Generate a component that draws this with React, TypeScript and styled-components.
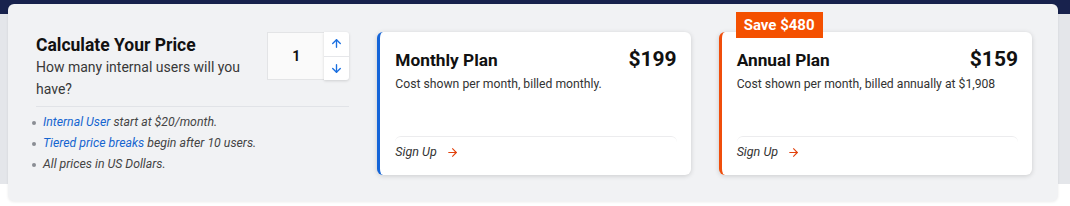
import React, { FC } from 'react';
import styled, { createGlobalStyle } from 'styled-components';
import { ArrowRight, ArrowUp, ArrowDown } from 'lucide-react';

const GlobalStyle = createGlobalStyle`
  html, body {
    margin: 0;
    padding: 0;
    background: #fff;
  }
  body {
    font-family: Roboto, "Liberation Sans", Arial, sans-serif;
    color: #111;
  }
  * { box-sizing: border-box; }
`;

const Page = styled.div`
  height: 206px;
  padding-top: 4px;
  background: linear-gradient(#18224d 0 14px, #e4e6ea 14px 184px, #fff 184px);
  overflow: hidden;
`;

const Panel = styled.div`
  margin-left: 8px;
  width: 1050px;
  display: grid;
  grid-template-columns: repeat(3, 1fr);
  gap: 28px;
  padding: 28px 26px 26px 28px;
  background: #f1f2f4;
  border-radius: 6px;
  box-shadow: 0 1px 3px rgba(0, 0, 0, 0.08);
`;

const Calc = styled.div`
  display: flex;
  flex-direction: column;
`;

const CalcHeader = styled.div`
  display: flex;
  align-items: flex-start;
`;

const CalcText = styled.div`
  flex: 1;
  padding-top: 2px;
`;

const Heading = styled.h2`
  margin: 0;
  font-size: 17.5px;
  line-height: 22px;
  font-weight: 700;
  color: #111;
`;

const Sub = styled.p`
  margin: 0;
  font-size: 14px;
  line-height: 22px;
  color: #383838;
`;

const Stepper = styled.div`
  display: flex;
  height: 48px;
`;

const NumberBox = styled.div`
  width: 57px;
  height: 48px;
  display: flex;
  align-items: center;
  justify-content: center;
  background: #fafafa;
  border: 1px solid #e3e4e6;
  border-right: none;
  font-size: 14px;
  font-weight: 700;
  color: #111;
`;

const Spin = styled.div`
  display: flex;
  flex-direction: column;
  width: 25px;
  background: #fff;
  border-radius: 0 3px 3px 0;
  box-shadow: 0 1px 3px rgba(0, 0, 0, 0.15);
`;

const SpinBtn = styled.div<{ $top?: boolean }>`
  flex: 1;
  display: flex;
  align-items: center;
  justify-content: center;
  color: #1a6fe0;
  border-bottom: ${(p) => (p.$top ? '1px solid #e6e7ea' : 'none')};
`;

const Divider = styled.hr`
  margin: 6px 0 0;
  border: none;
  border-top: 1px solid #e1e3e7;
`;

const Notes = styled.ul`
  margin: 5px 0 0;
  padding-left: 7px;
  list-style: none;
`;

const Note = styled.li`
  position: relative;
  font-size: 12.3px;
  line-height: 21px;
  font-style: italic;
  color: #444;

  &::before {
    content: '';
    position: absolute;
    left: -11px;
    top: 9px;
    width: 4px;
    height: 4px;
    border-radius: 50%;
    background: #8a8d93;
  }
`;

const NoteLink = styled.a`
  color: #1565d0;
  text-decoration: none;
`;

const Card = styled.div<{ $accent: string }>`
  position: relative;
  display: flex;
  flex-direction: column;
  background: #fff;
  border-left: 3px solid ${(p) => p.$accent};
  border-radius: 6px;
  padding: 14px 14px 0 15px;
  box-shadow: 0 1px 5px rgba(0, 0, 0, 0.16);
`;

const Badge = styled.div`
  position: absolute;
  top: -20px;
  left: 14px;
  height: 26px;
  padding: 0 8px;
  display: flex;
  align-items: center;
  background: #f45000;
  color: #fff;
  font-size: 15px;
  font-weight: 700;
`;

const CardHead = styled.div`
  display: flex;
  justify-content: space-between;
  align-items: baseline;
`;

const PlanName = styled.h3`
  margin: 0;
  font-size: 17.3px;
  line-height: 26px;
  font-weight: 700;
  color: #111;
`;

const Price = styled.div`
  font-size: 21px;
  line-height: 26px;
  font-weight: 700;
  color: #111;
`;

const PlanDesc = styled.p`
  margin: 2px 0 0;
  font-size: 12.2px;
  line-height: 18px;
  color: #333;
`;

const CardFoot = styled.div`
  margin-top: auto;
  border-top: 1px solid #ececee;
  border-radius: 6px 6px 0 0;
  padding: 6px 0 14px;
  display: flex;
  align-items: center;
  gap: 9px;
  font-size: 12.5px;
  line-height: 18px;
  font-style: italic;
  color: #333;
`;

interface PlanProps {
  name: string;
  price: string;
  desc: string;
  accent: string;
  badge?: string;
}

const Plan: FC<PlanProps> = ({ name, price, desc, accent, badge }) => (
  <Card $accent={accent}>
    {badge && <Badge>{badge}</Badge>}
    <CardHead>
      <PlanName>{name}</PlanName>
      <Price>{price}</Price>
    </CardHead>
    <PlanDesc>{desc}</PlanDesc>
    <CardFoot>
      Sign Up
      <ArrowRight size={13} color="#e2410b" strokeWidth={2} />
    </CardFoot>
  </Card>
);

const App: FC = () => {
  return (
    <>
      <GlobalStyle />
      <Page>
        <Panel>
          <Calc>
            <CalcHeader>
              <CalcText>
                <Heading>Calculate Your Price</Heading>
                <Sub>How many internal users will you have?</Sub>
              </CalcText>
              <Stepper>
                <NumberBox>1</NumberBox>
                <Spin>
                  <SpinBtn $top>
                    <ArrowUp size={13} strokeWidth={2.5} />
                  </SpinBtn>
                  <SpinBtn>
                    <ArrowDown size={13} strokeWidth={2.5} />
                  </SpinBtn>
                </Spin>
              </Stepper>
            </CalcHeader>
            <Divider />
            <Notes>
              <Note>
                <NoteLink href="#">Internal User</NoteLink> start at $20/month.
              </Note>
              <Note>
                <NoteLink href="#">Tiered price breaks</NoteLink> begin after 10 users.
              </Note>
              <Note>All prices in US Dollars.</Note>
            </Notes>
          </Calc>

          <Plan
            name="Monthly Plan"
            price="$199"
            desc="Cost shown per month, billed monthly."
            accent="#1565d8"
          />

          <Plan
            name="Annual Plan"
            price="$159"
            desc="Cost shown per month, billed annually at $1,908"
            accent="#f04e0b"
            badge="Save $480"
          />
        </Panel>
      </Page>
    </>
  );
};

export default App;
